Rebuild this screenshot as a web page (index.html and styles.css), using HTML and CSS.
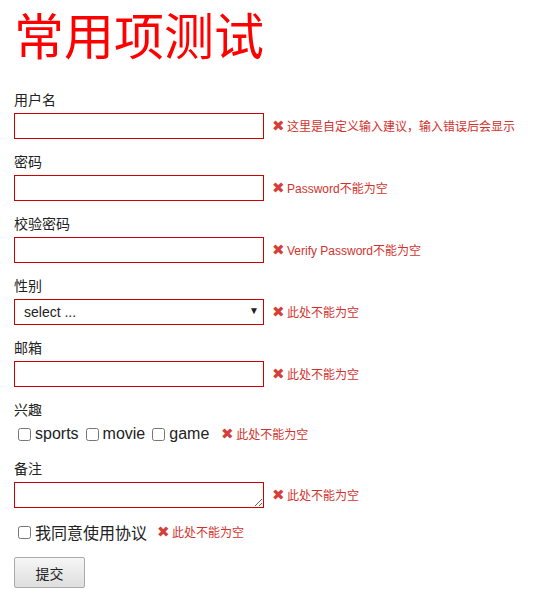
FILE: index.html
```html
<!DOCTYPE html>
<html lang="zh">
<head>
    <meta charset="UTF-8">
    <title>常用项测试</title>
    <link rel="stylesheet" href="styles.css">
</head>
<body>
    <h1 class="title">常用项测试</h1>
    <form class="form">
        <div class="group">
            <label class="label">用户名</label>
            <div class="row">
                <input class="field" type="text">
                <span class="error"><span class="x">✖</span>这里是自定义输入建议，输入错误后会显示</span>
            </div>
        </div>
        <div class="group">
            <label class="label">密码</label>
            <div class="row">
                <input class="field" type="password">
                <span class="error"><span class="x">✖</span>Password不能为空</span>
            </div>
        </div>
        <div class="group">
            <label class="label">校验密码</label>
            <div class="row">
                <input class="field" type="password">
                <span class="error"><span class="x">✖</span>Verify Password不能为空</span>
            </div>
        </div>
        <div class="group">
            <label class="label">性别</label>
            <div class="row">
                <div class="select-wrap">
                    <select class="field select">
                        <option>select ...</option>
                        <option>男</option>
                        <option>女</option>
                    </select>
                </div>
                <span class="error"><span class="x">✖</span>此处不能为空</span>
            </div>
        </div>
        <div class="group">
            <label class="label">邮箱</label>
            <div class="row">
                <input class="field" type="email">
                <span class="error"><span class="x">✖</span>此处不能为空</span>
            </div>
        </div>
        <div class="group">
            <label class="label">兴趣</label>
            <div class="row checks">
                <label class="check"><input type="checkbox">sports</label>
                <label class="check"><input type="checkbox">movie</label>
                <label class="check"><input type="checkbox">game</label>
                <span class="error"><span class="x">✖</span>此处不能为空</span>
            </div>
        </div>
        <div class="group notes">
            <label class="label">备注</label>
            <div class="row">
                <textarea class="field area"></textarea>
                <span class="error"><span class="x">✖</span>此处不能为空</span>
            </div>
        </div>
        <div class="row checks agree">
            <label class="check"><input type="checkbox">我同意使用协议</label>
            <span class="error"><span class="x">✖</span>此处不能为空</span>
        </div>
        <button class="submit" type="button">提交</button>
    </form>
</body>
</html>
```

FILE: styles.css
```css
body {
    margin: 0;
    font-family: "Liberation Sans", "Noto Sans CJK SC", sans-serif;
    color: #222;
    background: #fff;
}
.title {
    margin: 0;
    padding: 4px 0 0 14px;
    font-size: 50px;
    font-weight: normal;
    line-height: 68px;
    color: #ff0000;
}
.form {
    padding: 18px 14px 0;
}
.group {
    margin-bottom: 13px;
}
.label {
    display: block;
    font-size: 14px;
    line-height: 20px;
    margin-bottom: 3px;
}
.row {
    display: flex;
    align-items: center;
}
.field {
    box-sizing: border-box;
    width: 250px;
    height: 26px;
    margin: 0;
    border: 1px solid #cc0000;
    border-radius: 0;
    background: #fff;
    font-family: inherit;
    font-size: 14px;
}
.select-wrap {
    position: relative;
}
.select-wrap::after {
    content: "▼";
    position: absolute;
    right: 5px;
    top: 6px;
    font-size: 10px;
    color: #222;
    pointer-events: none;
}
.select {
    -webkit-appearance: none;
    appearance: none;
    padding: 0 9px;
    color: #222;
}
.area {
    resize: both;
    overflow-y: scroll;
    padding: 2px;
}
.area::-webkit-scrollbar {
    width: 17px;
}
.area::-webkit-scrollbar-track {
    background: #fff;
    border-left: 1px solid #e2e2e2;
}
.error {
    margin-left: 8px;
    font-size: 12px;
    color: #d2322d;
}
.x {
    margin-right: 2px;
    font-size: 15px;
    color: #d43f3a;
}
.checks {
    height: 22px;
    margin-top: 1px;
    padding-left: 4px;
}
.check {
    display: flex;
    align-items: center;
    font-size: 16px;
    margin-right: 7px;
}
.check input {
    width: 13px;
    height: 13px;
    margin: 0 4px 0 0;
}
.checks .error {
    margin-left: 5px;
}
.notes {
    margin-top: 14px;
}
.agree {
    margin-top: 0;
    margin-bottom: 14px;
}
.agree .error {
    margin-left: 3px;
}
.submit {
    width: 71px;
    height: 31px;
    font-family: inherit;
    font-size: 14px;
    color: #222;
    border: 1px solid #a9a9a9;
    border-radius: 2px;
    background: linear-gradient(#f6f6f6, #dedede);
}
```
